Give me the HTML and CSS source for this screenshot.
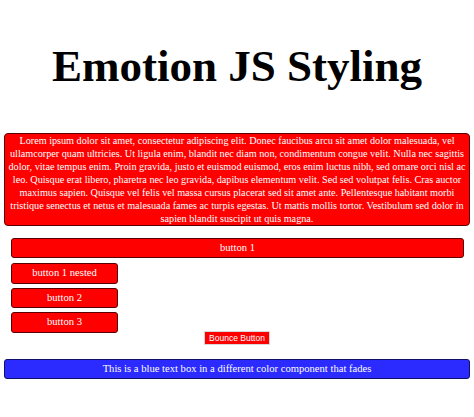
FILE: index.html
```html
<!DOCTYPE html>
<html>
<head>
<meta charset="utf-8">
<link rel="stylesheet" href="styles.css">
</head>
<body>
<h1 class="title">Emotion JS Styling</h1>
<div class="red-box">Lorem ipsum dolor sit amet, consectetur adipiscing elit. Donec faucibus arcu sit amet dolor malesuada, vel ullamcorper quam ultricies. Ut ligula enim, blandit nec diam non, condimentum congue velit. Nulla nec sagittis dolor, vitae tempus enim. Proin gravida, justo et euismod euismod, eros enim luctus nibh, sed ornare orci nisl ac leo. Quisque erat libero, pharetra nec leo gravida, dapibus elementum velit. Sed sed volutpat felis. Cras auctor maximus sapien. Quisque vel felis vel massa cursus placerat sed sit amet ante. Pellentesque habitant morbi tristique senectus et netus et malesuada fames ac turpis egestas. Ut mattis mollis tortor. Vestibulum sed dolor in sapien blandit suscipit ut quis magna.</div>
<div class="buttons">
  <div class="btn btn-wide">button 1</div>
  <div class="nested">
    <div class="btn btn-small">button 1 nested</div>
    <div class="btn btn-small">button 2</div>
    <div class="btn btn-small">button 3</div>
  </div>
</div>
<div class="bounce-row"><button class="bounce">Bounce Button</button></div>
<div class="blue-box">This is a blue text box in a different color component that fades</div>
</body>
</html>
```
FILE: styles.css
```css
body {
  margin: 0;
  font-family: "Liberation Serif", "Times New Roman", serif;
  background: #ffffff;
}
.title {
  margin: 40px 0 41px;
  font-size: 45px;
  font-weight: bold;
  text-align: center;
  color: #000;
}
.red-box {
  margin: 0 4px;
  background: #ff0000;
  color: #ffffff;
  border: 1px solid #5a0000;
  border-radius: 4px;
  font-size: 10.2px;
  line-height: 13px;
  text-align: center;
  padding: 0;
}
.buttons {
  margin: 12px 10px 0 11px;
  display: flex;
  flex-direction: column;
  gap: 5px;
}
.nested {
  display: flex;
  flex-direction: column;
  gap: 4px;
}
.btn {
  background: #ff0000;
  color: #ffffff;
  border: 1px solid #5a0000;
  border-radius: 3px;
  height: 18px;
  line-height: 18px;
  font-size: 10.6px;
  text-align: center;
}
.btn-small {
  width: 105px;
  height: 18.5px;
  line-height: 18.5px;
}
.bounce-row {
  text-align: center;
}
.bounce {
  font-family: "Liberation Sans", Arial, sans-serif;
  font-size: 8.5px;
  color: #ffffff;
  background: #ff0000;
  border: 1px solid #d9d9d9;
  padding: 1px 4px;
  height: 14px;
  line-height: 10px;
  margin: 0;
  transform: translateY(-6px);
}
.blue-box {
  margin: 8px 4px 0;
  background: #2b2bff;
  color: #ffffff;
  border: 1px solid #10106a;
  border-radius: 3px;
  height: 18px;
  line-height: 18px;
  font-size: 10.6px;
  text-align: center;
}
```
